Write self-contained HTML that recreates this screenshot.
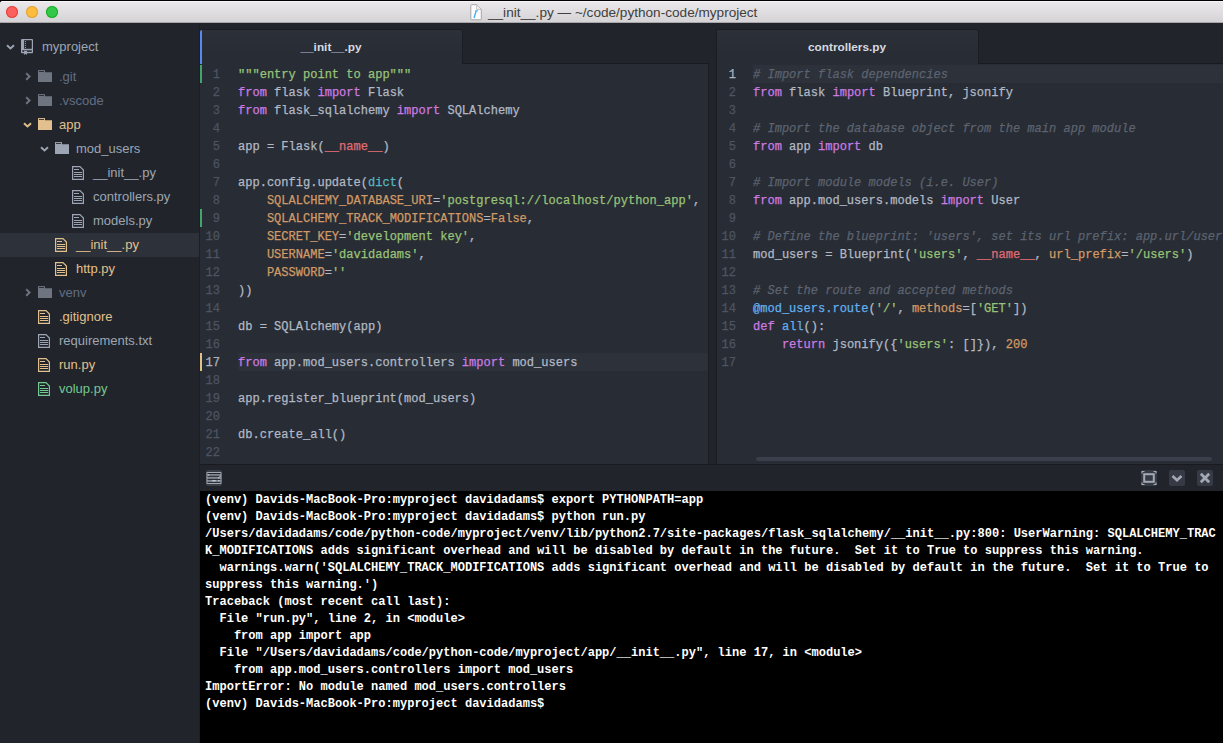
<!DOCTYPE html><html><head><meta charset="utf-8"><style>
*{margin:0;padding:0;box-sizing:border-box}
html,body{width:1223px;height:743px;overflow:hidden;background:#000}
body{position:relative;font-family:"Liberation Sans",sans-serif}
.abs{position:absolute}
#title{left:0;top:1px;width:1223px;height:22px;background:linear-gradient(#ebe9eb,#d4d2d4);border-radius:3px 0 0 0;box-shadow:inset 0 1px 0 #f6f5f6}
#tline{left:0;top:22px;width:1223px;height:1px;background:#a9a7a9}
.light{position:absolute;top:5px;width:12px;height:12px;border-radius:50%}
#ttext{left:488px;top:3px;font-size:13.6px;color:#404040;white-space:nowrap;line-height:17px}
#tree{left:0;top:23px;width:200px;height:720px;background:#21252b}
.row{position:absolute;left:0;width:200px;height:24px;font-size:13px;line-height:24px;white-space:nowrap;color:#9da5b4}
.row .t{position:absolute;top:1px}
.row svg{position:absolute}
.sel{position:absolute;left:0;width:200px;height:24px;background:#2c313a}
.ign{color:#636d83}
.mod{color:#e2c08d}
.add{color:#73c991}
#tabbar{left:200px;top:23px;width:1023px;height:41px;background:#21252b}
.tab{position:absolute;top:30px;height:35px;background:linear-gradient(#2c3039,#282c34 70%);border-radius:2px 2px 0 0;box-shadow:0 -1px 0 #1a1d22, 1px 0 0 #1a1d22}
.tabl{position:absolute;top:0;width:100%;text-align:center;font-size:11.8px;font-weight:bold;color:#d7dae0;line-height:34px}
.pane{position:absolute;background:#282c34;overflow:hidden}
.code{font-family:"Liberation Mono",monospace;font-size:12.04px;white-space:pre;line-height:18px;color:#b2b9c5;-webkit-text-stroke:0.25px currentColor}
.line{position:absolute;left:0;height:18px;width:100%}
.ln{position:absolute;left:0;text-align:right;color:#4d5463}
.tx{position:absolute}
.cur{background:#2c313a}
.k{color:#cc7be2}.s{color:#98c379}.c{color:#5c6370;font-style:italic}.o{color:#d19a66}.r{color:#e06c75}.b{color:#56b6c2}.f{color:#61afef}
#phead{left:200px;top:464px;width:1023px;height:27px;background:#21252b;border-top:1px solid #181a1f}
#term{left:200px;top:491px;width:1023px;height:252px;background:#000}
.tl{position:absolute;left:5px;font-family:"Liberation Mono",monospace;font-size:12.04px;white-space:pre;line-height:17px;color:#fff;font-weight:bold}
</style></head><body>
<div id="title" class="abs">
<div class="light" style="left:6px;background:#fc605c;box-shadow:inset 0 0 0 1px #e0443e"></div>
<div class="light" style="left:26px;background:#fdbc40;box-shadow:inset 0 0 0 1px #dea236"></div>
<div class="light" style="left:46px;background:#34c84a;box-shadow:inset 0 0 0 1px #1aab29"></div>
<svg class="abs" style="left:470px;top:3px" width="13" height="17" viewBox="0 0 13 17"><path d="M0.8 1.2Q0.8 0.7 1.3 0.7H6.6L11.3 5.4V15.3Q11.3 15.8 10.8 15.8H1.3Q0.8 15.8 0.8 15.3Z" fill="#fdfdfd" stroke="#a6a6a6" stroke-width="1"/><path d="M6.6 0.9V5.4H11.1" fill="#f0f0f0" stroke="#b5b5b5" stroke-width="0.8"/><path d="M4.1 14L6.1 6.9" stroke="#44b1f2" stroke-width="1.4"/><path d="M5.2 6.8H8" stroke="#44b1f2" stroke-width="1.1"/></svg>
<div id="ttext" class="abs">__init__.py — ~/code/python-code/myproject</div>
</div><div id="tline" class="abs"></div>
<div id="tree" class="abs">
<div class="row" style="top:11px"><svg style="left:5.5px;top:9.5px" width="9" height="7" viewBox="0 0 9 7"><path d="M1 1.2L4.5 4.4L8 1.2" fill="none" stroke="#9da5b4" stroke-width="1.9"/></svg><svg style="left:21px;top:5px" width="12" height="17" viewBox="0 0 12 17"><rect x="0" y="0" width="12" height="14.2" rx="1" fill="#9da5b4"/><rect x="3.1" y="1.2" width="7.7" height="8.6" fill="#21252b"/><circle cx="4.5" cy="2.6" r="0.6" fill="#9da5b4"/><circle cx="4.5" cy="4.5" r="0.6" fill="#9da5b4"/><circle cx="4.5" cy="6.5" r="0.6" fill="#9da5b4"/><circle cx="4.5" cy="8.5" r="0.6" fill="#9da5b4"/><rect x="1.2" y="11.3" width="9.6" height="1.5" fill="#21252b"/><path d="M3.1 11.8H6V16L4.55 14.8L3.1 16Z" fill="#9da5b4"/></svg><span class="t" style="left:42px;color:#9da5b4">myproject</span></div>
<div class="row" style="top:41px"><svg style="left:25px;top:8px" width="7" height="9" viewBox="0 0 7 9"><path d="M1.2 1.2L4.6 4.5L1.2 7.8" fill="none" stroke="#6e7480" stroke-width="1.9"/></svg><svg style="left:38px;top:6px" width="14" height="12" viewBox="0 0 14 12"><path d="M0 0.6Q0 0 0.6 0H6.4Q7 0 7 0.6V2.2H14V12H0Z" fill="#6e7480"/><rect x="1" y="0.9" width="5" height="1.1" fill="#21252b" opacity="0.85"/></svg><span class="t" style="left:59px;color:#636d83">.git</span></div>
<div class="row" style="top:65px"><svg style="left:25px;top:8px" width="7" height="9" viewBox="0 0 7 9"><path d="M1.2 1.2L4.6 4.5L1.2 7.8" fill="none" stroke="#6e7480" stroke-width="1.9"/></svg><svg style="left:38px;top:6px" width="14" height="12" viewBox="0 0 14 12"><path d="M0 0.6Q0 0 0.6 0H6.4Q7 0 7 0.6V2.2H14V12H0Z" fill="#6e7480"/><rect x="1" y="0.9" width="5" height="1.1" fill="#21252b" opacity="0.85"/></svg><span class="t" style="left:59px;color:#636d83">.vscode</span></div>
<div class="row" style="top:89px"><svg style="left:22.5px;top:9.5px" width="9" height="7" viewBox="0 0 9 7"><path d="M1 1.2L4.5 4.4L8 1.2" fill="none" stroke="#e2c08d" stroke-width="1.9"/></svg><svg style="left:38px;top:6px" width="14" height="12" viewBox="0 0 14 12"><path d="M0 0.6Q0 0 0.6 0H6.4Q7 0 7 0.6V2.2H14V12H0Z" fill="#e2c08d"/><rect x="1" y="0.9" width="5" height="1.1" fill="#21252b" opacity="0.85"/></svg><span class="t" style="left:59px;color:#e2c08d">app</span></div>
<div class="row" style="top:113px"><svg style="left:39.5px;top:9.5px" width="9" height="7" viewBox="0 0 9 7"><path d="M1 1.2L4.5 4.4L8 1.2" fill="none" stroke="#9da5b4" stroke-width="1.9"/></svg><svg style="left:55px;top:6px" width="14" height="12" viewBox="0 0 14 12"><path d="M0 0.6Q0 0 0.6 0H6.4Q7 0 7 0.6V2.2H14V12H0Z" fill="#9da5b4"/><rect x="1" y="0.9" width="5" height="1.1" fill="#21252b" opacity="0.85"/></svg><span class="t" style="left:76px;color:#9da5b4">mod_users</span></div>
<div class="row" style="top:137px"><svg style="left:71px;top:5px" width="14" height="16" viewBox="0 0 14 16"><path d="M1.6 1.6H9L12.4 5V14.4H1.6Z" fill="none" stroke="#9da5b4" stroke-width="1.2"/><path d="M3 4.5H8M3 7.5H11M3 9.5H11M3 11.5H11" stroke="#9da5b4" stroke-width="1"/></svg><span class="t" style="left:93px;color:#9da5b4">__init__.py</span></div>
<div class="row" style="top:161px"><svg style="left:71px;top:5px" width="14" height="16" viewBox="0 0 14 16"><path d="M1.6 1.6H9L12.4 5V14.4H1.6Z" fill="none" stroke="#9da5b4" stroke-width="1.2"/><path d="M3 4.5H8M3 7.5H11M3 9.5H11M3 11.5H11" stroke="#9da5b4" stroke-width="1"/></svg><span class="t" style="left:93px;color:#9da5b4">controllers.py</span></div>
<div class="row" style="top:185px"><svg style="left:71px;top:5px" width="14" height="16" viewBox="0 0 14 16"><path d="M1.6 1.6H9L12.4 5V14.4H1.6Z" fill="none" stroke="#9da5b4" stroke-width="1.2"/><path d="M3 4.5H8M3 7.5H11M3 9.5H11M3 11.5H11" stroke="#9da5b4" stroke-width="1"/></svg><span class="t" style="left:93px;color:#9da5b4">models.py</span></div>
<div class="sel" style="top:210px"></div>
<div class="row" style="top:209px"><svg style="left:54px;top:5px" width="14" height="16" viewBox="0 0 14 16"><path d="M1.6 1.6H9L12.4 5V14.4H1.6Z" fill="none" stroke="#e2c08d" stroke-width="1.2"/><path d="M3 4.5H8M3 7.5H11M3 9.5H11M3 11.5H11" stroke="#e2c08d" stroke-width="1"/></svg><span class="t" style="left:76px;color:#e2c08d">__init__.py</span></div>
<div class="row" style="top:233px"><svg style="left:54px;top:5px" width="14" height="16" viewBox="0 0 14 16"><path d="M1.6 1.6H9L12.4 5V14.4H1.6Z" fill="none" stroke="#e2c08d" stroke-width="1.2"/><path d="M3 4.5H8M3 7.5H11M3 9.5H11M3 11.5H11" stroke="#e2c08d" stroke-width="1"/></svg><span class="t" style="left:76px;color:#e2c08d">http.py</span></div>
<div class="row" style="top:257px"><svg style="left:25px;top:8px" width="7" height="9" viewBox="0 0 7 9"><path d="M1.2 1.2L4.6 4.5L1.2 7.8" fill="none" stroke="#6e7480" stroke-width="1.9"/></svg><svg style="left:38px;top:6px" width="14" height="12" viewBox="0 0 14 12"><path d="M0 0.6Q0 0 0.6 0H6.4Q7 0 7 0.6V2.2H14V12H0Z" fill="#6e7480"/><rect x="1" y="0.9" width="5" height="1.1" fill="#21252b" opacity="0.85"/></svg><span class="t" style="left:59px;color:#636d83">venv</span></div>
<div class="row" style="top:281px"><svg style="left:37px;top:5px" width="14" height="16" viewBox="0 0 14 16"><path d="M1.6 1.6H9L12.4 5V14.4H1.6Z" fill="none" stroke="#e2c08d" stroke-width="1.2"/><path d="M3 4.5H8M3 7.5H11M3 9.5H11M3 11.5H11" stroke="#e2c08d" stroke-width="1"/></svg><span class="t" style="left:59px;color:#e2c08d">.gitignore</span></div>
<div class="row" style="top:305px"><svg style="left:37px;top:5px" width="14" height="16" viewBox="0 0 14 16"><path d="M1.6 1.6H9L12.4 5V14.4H1.6Z" fill="none" stroke="#9da5b4" stroke-width="1.2"/><path d="M3 4.5H8M3 7.5H11M3 9.5H11M3 11.5H11" stroke="#9da5b4" stroke-width="1"/></svg><span class="t" style="left:59px;color:#9da5b4">requirements.txt</span></div>
<div class="row" style="top:329px"><svg style="left:37px;top:5px" width="14" height="16" viewBox="0 0 14 16"><path d="M1.6 1.6H9L12.4 5V14.4H1.6Z" fill="none" stroke="#e2c08d" stroke-width="1.2"/><path d="M3 4.5H8M3 7.5H11M3 9.5H11M3 11.5H11" stroke="#e2c08d" stroke-width="1"/></svg><span class="t" style="left:59px;color:#e2c08d">run.py</span></div>
<div class="row" style="top:353px"><svg style="left:37px;top:5px" width="14" height="16" viewBox="0 0 14 16"><path d="M1.6 1.6H9L12.4 5V14.4H1.6Z" fill="none" stroke="#73c991" stroke-width="1.2"/><path d="M3 4.5H8M3 7.5H11M3 9.5H11M3 11.5H11" stroke="#73c991" stroke-width="1"/></svg><span class="t" style="left:59px;color:#73c991">volup.py</span></div>
</div>
<div class="abs" style="left:199px;top:23px;width:1px;height:720px;background:#1b1e23"></div>
<div id="tabbar" class="abs"></div>
<div class="abs" style="left:462px;top:63px;width:247px;height:1px;background:#181a1f"></div>
<div class="abs" style="left:978px;top:63px;width:245px;height:1px;background:#181a1f"></div>
<div class="tab" style="left:200px;width:262px"><div class="tabl">__init__.py</div></div>
<div class="abs" style="left:200px;top:30px;width:2px;height:34px;background:#568af2;border-radius:2px 0 0 0"></div>
<div class="tab" style="left:716px;width:262px"><div class="tabl">controllers.py</div></div>
<div class="pane code" style="left:200px;top:64px;width:508px;height:400px;padding-top:1px">
<div class="ln" style="top:2px;width:20px;">1</div>
<div class="tx" style="left:38px;top:2px"><span class="s">&quot;&quot;&quot;entry point to app&quot;&quot;&quot;</span></div>
<div class="ln" style="top:20px;width:20px;">2</div>
<div class="tx" style="left:38px;top:20px"><span class="k">from</span> flask <span class="k">import</span> Flask</div>
<div class="ln" style="top:38px;width:20px;">3</div>
<div class="tx" style="left:38px;top:38px"><span class="k">from</span> flask_sqlalchemy <span class="k">import</span> SQLAlchemy</div>
<div class="ln" style="top:56px;width:20px;">4</div>
<div class="tx" style="left:38px;top:56px"></div>
<div class="ln" style="top:74px;width:20px;">5</div>
<div class="tx" style="left:38px;top:74px">app = Flask(<span class="r">__name__</span>)</div>
<div class="ln" style="top:92px;width:20px;">6</div>
<div class="tx" style="left:38px;top:92px"></div>
<div class="ln" style="top:110px;width:20px;">7</div>
<div class="tx" style="left:38px;top:110px">app.config.update(<span class="b">dict</span>(</div>
<div class="ln" style="top:128px;width:20px;">8</div>
<div class="tx" style="left:38px;top:128px">    <span class="o">SQLALCHEMY_DATABASE_URI</span>=<span class="s">&#x27;postgresql://localhost/python_app&#x27;</span>,</div>
<div class="ln" style="top:146px;width:20px;">9</div>
<div class="tx" style="left:38px;top:146px">    <span class="o">SQLALCHEMY_TRACK_MODIFICATIONS</span>=<span class="o">False</span>,</div>
<div class="ln" style="top:164px;width:20px;">10</div>
<div class="tx" style="left:38px;top:164px">    <span class="o">SECRET_KEY</span>=<span class="s">&#x27;development key&#x27;</span>,</div>
<div class="ln" style="top:182px;width:20px;">11</div>
<div class="tx" style="left:38px;top:182px">    <span class="o">USERNAME</span>=<span class="s">&#x27;davidadams&#x27;</span>,</div>
<div class="ln" style="top:200px;width:20px;">12</div>
<div class="tx" style="left:38px;top:200px">    <span class="o">PASSWORD</span>=<span class="s">&#x27;&#x27;</span></div>
<div class="ln" style="top:218px;width:20px;">13</div>
<div class="tx" style="left:38px;top:218px">))</div>
<div class="ln" style="top:236px;width:20px;">14</div>
<div class="tx" style="left:38px;top:236px"></div>
<div class="ln" style="top:254px;width:20px;">15</div>
<div class="tx" style="left:38px;top:254px">db = SQLAlchemy(app)</div>
<div class="ln" style="top:272px;width:20px;">16</div>
<div class="tx" style="left:38px;top:272px"></div>
<div class="cur abs" style="left:38px;top:289px;width:470px;height:18px"></div>
<div class="ln" style="top:290px;width:20px;color:#abb2bf;">17</div>
<div class="tx" style="left:38px;top:290px"><span class="k">from</span> app.mod_users.controllers <span class="k">import</span> mod_users</div>
<div class="ln" style="top:308px;width:20px;">18</div>
<div class="tx" style="left:38px;top:308px"></div>
<div class="ln" style="top:326px;width:20px;">19</div>
<div class="tx" style="left:38px;top:326px">app.register_blueprint(mod_users)</div>
<div class="ln" style="top:344px;width:20px;">20</div>
<div class="tx" style="left:38px;top:344px"></div>
<div class="ln" style="top:362px;width:20px;">21</div>
<div class="tx" style="left:38px;top:362px">db.create_all()</div>
<div class="ln" style="top:380px;width:20px;">22</div>
<div class="tx" style="left:38px;top:380px"></div>
<div class="abs" style="left:0;top:1px;width:2px;height:18px;background:#44a46c"></div>
<div class="abs" style="left:0;top:145px;width:2px;height:18px;background:#44a46c"></div>
<div class="abs" style="left:0;top:289px;width:2px;height:18px;background:#e0c285"></div>
</div>
<div class="pane code" style="left:716px;top:64px;width:507px;height:400px;padding-top:1px">
<div class="cur abs" style="left:37px;top:1px;width:470px;height:18px"></div>
<div class="ln" style="top:2px;width:20px;color:#abb2bf;">1</div>
<div class="tx" style="left:37px;top:2px"><span class="c"># Import flask dependencies</span></div>
<div class="ln" style="top:20px;width:20px;">2</div>
<div class="tx" style="left:37px;top:20px"><span class="k">from</span> flask <span class="k">import</span> Blueprint, jsonify</div>
<div class="ln" style="top:38px;width:20px;">3</div>
<div class="tx" style="left:37px;top:38px"></div>
<div class="ln" style="top:56px;width:20px;">4</div>
<div class="tx" style="left:37px;top:56px"><span class="c"># Import the database object from the main app module</span></div>
<div class="ln" style="top:74px;width:20px;">5</div>
<div class="tx" style="left:37px;top:74px"><span class="k">from</span> app <span class="k">import</span> db</div>
<div class="ln" style="top:92px;width:20px;">6</div>
<div class="tx" style="left:37px;top:92px"></div>
<div class="ln" style="top:110px;width:20px;">7</div>
<div class="tx" style="left:37px;top:110px"><span class="c"># Import module models (i.e. User)</span></div>
<div class="ln" style="top:128px;width:20px;">8</div>
<div class="tx" style="left:37px;top:128px"><span class="k">from</span> app.mod_users.models <span class="k">import</span> User</div>
<div class="ln" style="top:146px;width:20px;">9</div>
<div class="tx" style="left:37px;top:146px"></div>
<div class="ln" style="top:164px;width:20px;">10</div>
<div class="tx" style="left:37px;top:164px"><span class="c"># Define the blueprint: &#x27;users&#x27;, set its url prefix: app.url/users</span></div>
<div class="ln" style="top:182px;width:20px;">11</div>
<div class="tx" style="left:37px;top:182px">mod_users = Blueprint(<span class="s">&#x27;users&#x27;</span>, <span class="r">__name__</span>, <span class="o">url_prefix</span>=<span class="s">&#x27;/users&#x27;</span>)</div>
<div class="ln" style="top:200px;width:20px;">12</div>
<div class="tx" style="left:37px;top:200px"></div>
<div class="ln" style="top:218px;width:20px;">13</div>
<div class="tx" style="left:37px;top:218px"><span class="c"># Set the route and accepted methods</span></div>
<div class="ln" style="top:236px;width:20px;">14</div>
<div class="tx" style="left:37px;top:236px"><span class="f">@mod_users.route</span>(<span class="s">&#x27;/&#x27;</span>, <span class="o">methods</span>=[<span class="s">&#x27;GET&#x27;</span>])</div>
<div class="ln" style="top:254px;width:20px;">15</div>
<div class="tx" style="left:37px;top:254px"><span class="k">def</span> <span class="f">all</span>():</div>
<div class="ln" style="top:272px;width:20px;">16</div>
<div class="tx" style="left:37px;top:272px">    <span class="k">return</span> jsonify({<span class="s">&#x27;users&#x27;</span>: []}), <span class="o">200</span></div>
<div class="ln" style="top:290px;width:20px;">17</div>
<div class="tx" style="left:37px;top:290px"></div>
</div>
<div class="abs" style="left:708px;top:64px;width:1px;height:400px;background:#1a1d22"></div>
<div class="abs" style="left:709px;top:23px;width:7px;height:441px;background:#21252b"></div>
<div class="abs" style="left:716px;top:30px;width:1px;height:434px;background:#1a1d22"></div>
<div class="abs" style="left:756px;top:457px;width:456px;height:4px;border-radius:2px;background:#3a3f4b"></div>
<div id="phead" class="abs">
<svg class="abs" style="left:5.5px;top:5px" width="16" height="16" viewBox="0 0 16 16"><rect x="0" y="0" width="16" height="16" rx="2" fill="#383d46"/><rect x="0.5" y="2" width="15" height="12" rx="0.8" fill="#a3a9b4"/><rect x="1.5" y="3" width="13" height="10" fill="#80868f"/><path d="M1.5 3.5H14.5M1.5 6.3H13M1.5 9.4H14.5M1.5 12.4H14.5" stroke="#22262c" stroke-width="1"/><rect x="2" y="4.2" width="1.2" height="1.3" fill="#c0c5cd"/><rect x="12.2" y="7" width="1.2" height="1.5" fill="#c0c5cd"/><rect x="6.2" y="10" width="3.5" height="1.4" fill="#c0c5cd"/><rect x="12.2" y="10" width="1.2" height="1.4" fill="#c0c5cd"/></svg>
<svg class="abs" style="left:941px;top:5px" width="16" height="16" viewBox="0 0 16 16"><rect x="0" y="0" width="16" height="16" rx="2" fill="#353a44"/><path d="M1 3.5V1.5H3.5M12.5 1.5H15V3.5M15 12.5V14.5H12.5M3.5 14.5H1V12.5" fill="none" stroke="#a3a9b4" stroke-width="1.2"/><rect x="3.2" y="4.2" width="9.6" height="7.6" fill="none" stroke="#a3a9b4" stroke-width="2"/></svg>
<svg class="abs" style="left:969px;top:5px" width="16" height="16" viewBox="0 0 16 16"><rect x="0" y="0" width="16" height="16" rx="2" fill="#353a44"/><path d="M3.5 6L8 10.3L12.5 6" fill="none" stroke="#a3a9b4" stroke-width="2.6"/></svg>
<svg class="abs" style="left:997px;top:5px" width="16" height="16" viewBox="0 0 16 16"><rect x="0" y="0" width="16" height="16" rx="2" fill="#353a44"/><path d="M3.8 3.8L12.2 12.2M12.2 3.8L3.8 12.2" fill="none" stroke="#a3a9b4" stroke-width="2.8"/></svg>
</div>
<div id="term" class="abs">
<div class="tl" style="top:1px">(venv) Davids-MacBook-Pro:myproject davidadams$ export PYTHONPATH=app</div>
<div class="tl" style="top:18px">(venv) Davids-MacBook-Pro:myproject davidadams$ python run.py</div>
<div class="tl" style="top:35px">/Users/davidadams/code/python-code/myproject/venv/lib/python2.7/site-packages/flask_sqlalchemy/__init__.py:800: UserWarning: SQLALCHEMY_TRAC</div>
<div class="tl" style="top:52px">K_MODIFICATIONS adds significant overhead and will be disabled by default in the future.  Set it to True to suppress this warning.</div>
<div class="tl" style="top:69px">  warnings.warn(&#x27;SQLALCHEMY_TRACK_MODIFICATIONS adds significant overhead and will be disabled by default in the future.  Set it to True to</div>
<div class="tl" style="top:86px">suppress this warning.&#x27;)</div>
<div class="tl" style="top:103px">Traceback (most recent call last):</div>
<div class="tl" style="top:120px">  File &quot;run.py&quot;, line 2, in &lt;module&gt;</div>
<div class="tl" style="top:137px">    from app import app</div>
<div class="tl" style="top:154px">  File &quot;/Users/davidadams/code/python-code/myproject/app/__init__.py&quot;, line 17, in &lt;module&gt;</div>
<div class="tl" style="top:171px">    from app.mod_users.controllers import mod_users</div>
<div class="tl" style="top:188px">ImportError: No module named mod_users.controllers</div>
<div class="tl" style="top:205px">(venv) Davids-MacBook-Pro:myproject davidadams$</div>
</div>
</body></html>
